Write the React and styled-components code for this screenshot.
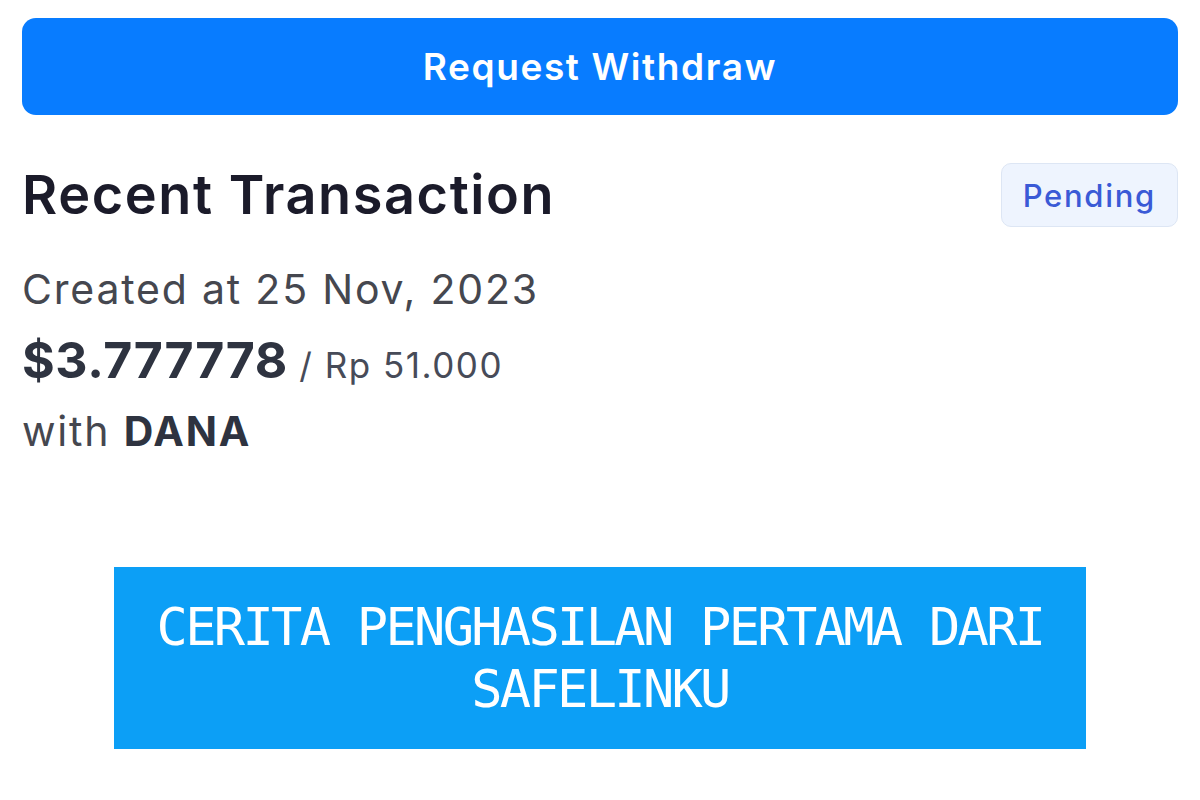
import React from 'react';
import styled, { createGlobalStyle } from 'styled-components';

const GlobalStyle = createGlobalStyle`
  body {
    margin: 0;
    background: #ffffff;
    font-family: Inter, "Noto Sans", sans-serif;
  }
`;

const transaction = {
  created: '25 Nov, 2023',
  usd: '$3.777778',
  idr: 'Rp 51.000',
  method: 'DANA',
  status: 'Pending',
};

function App() {
  return (
    <>
      <GlobalStyle />
      <Page>
        <WithdrawButton>Request Withdraw</WithdrawButton>
        <HeaderRow>
          <Title>Recent Transaction</Title>
          <Badge>{transaction.status}</Badge>
        </HeaderRow>
        <CreatedLine>Created at {transaction.created}</CreatedLine>
        <AmountLine>
          <Usd>{transaction.usd}</Usd>
          <Idr> / {transaction.idr}</Idr>
        </AmountLine>
        <MethodLine>
          with <strong>{transaction.method}</strong>
        </MethodLine>
        <Banner>
          <BannerText>CERITA PENGHASILAN PERTAMA DARI SAFELINKU</BannerText>
        </Banner>
      </Page>
    </>
  );
}

export default App;

const Page = styled.div`
  padding: 18px 22px 0;
  display: flex;
  flex-direction: column;
`;

const WithdrawButton = styled.button`
  height: 97px;
  width: 100%;
  border: none;
  border-radius: 14px;
  background: #087cff;
  color: #ffffff;
  font-family: Inter, "Noto Sans", sans-serif;
  font-size: 37px;
  font-weight: 600;
  letter-spacing: 1.6px;
  cursor: pointer;
`;

const HeaderRow = styled.div`
  margin-top: 48px;
  height: 64px;
  display: flex;
  align-items: center;
  justify-content: space-between;
`;

const Title = styled.h2`
  margin: 0;
  font-size: 54px;
  line-height: 62px;
  font-weight: 600;
  letter-spacing: 1.6px;
  color: #1b1b2a;
`;

const Badge = styled.span`
  height: 64px;
  box-sizing: border-box;
  padding: 0 21px;
  display: flex;
  align-items: center;
  border: 1.5px solid #dde6f4;
  border-radius: 10px;
  background: #eef4fe;
  color: #3a5ad6;
  font-size: 31px;
  font-weight: 500;
  letter-spacing: 1.7px;
`;

const CreatedLine = styled.div`
  margin-top: 36px;
  font-size: 41px;
  line-height: 52px;
  letter-spacing: 1.8px;
  color: #45474f;
`;

const AmountLine = styled.div`
  margin-top: 13px;
  line-height: 64px;
  color: #474b58;
`;

const Usd = styled.span`
  font-size: 50px;
  font-weight: 700;
  letter-spacing: 0.6px;
  color: #2e3340;
`;

const Idr = styled.span`
  font-size: 35px;
  letter-spacing: 1.5px;
`;

const MethodLine = styled.div`
  margin-top: 1px;
  font-size: 41px;
  line-height: 52px;
  letter-spacing: 1.8px;
  color: #45474f;

  strong {
    font-weight: 700;
    color: #2e3340;
  }
`;

const Banner = styled.div`
  margin: 110px auto 0;
  width: 972px;
  height: 182px;
  background: #0c9ff6;
  display: flex;
  align-items: center;
  justify-content: center;
`;

const BannerText = styled.p`
  margin: 0;
  padding: 0 30px;
  text-align: center;
  color: #ffffff;
  font-family: "DejaVu Sans Mono", "Liberation Mono", monospace;
  font-size: 52px;
  line-height: 62px;
  letter-spacing: -2.7px;
`;
